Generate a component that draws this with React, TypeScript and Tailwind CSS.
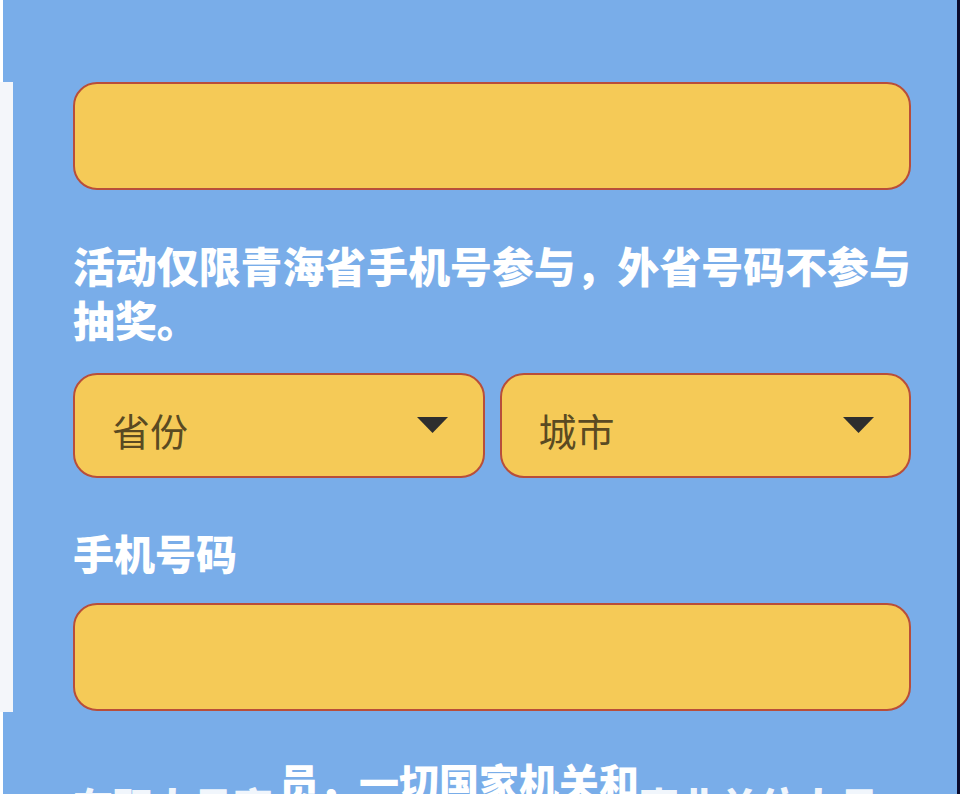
import { useState } from "react";

const cjk = "font-['Noto_Sans_CJK_SC','Noto_Sans',sans-serif]";

function Field({ value, onChange }: { value: string; onChange: (v: string) => void }) {
  return (
    <input
      type="tel"
      value={value}
      onChange={(e) => onChange(e.target.value)}
      className={`block h-[108px] w-full shrink-0 rounded-[24px] border-[2.5px] border-[#b84e3a] bg-[#f5ca57] px-10 text-[38px] text-[#5a4a22] outline-none ${cjk}`}
    />
  );
}

function Select({ label }: { label: string }) {
  return (
    <button
      type="button"
      className={`flex h-[105px] flex-1 items-center justify-between rounded-[24px] border-[2.5px] border-[#b84e3a] bg-[#f5ca57] pl-[37px] pr-[35px] ${cjk}`}
    >
      <span className="mt-[8px] text-[38px] leading-none text-[#5a4a22]">{label}</span>
      <svg width="31" height="16" viewBox="0 0 31 16" className="mt-[-2px]">
        <path d="M0 0 H31 L15.5 16 Z" fill="#2e2e2e" />
      </svg>
    </button>
  );
}

export default function App() {
  const [code, setCode] = useState("");
  const [phone, setPhone] = useState("");

  return (
    <main className={`flex h-[794px] w-[960px] overflow-hidden bg-white ${cjk}`}>
      <div className="flex w-[13px] shrink-0 flex-col">
        <div className="flex h-[82px] shrink-0">
          <div className="w-[3px] bg-white" />
          <div className="flex-1 bg-[#79ade9]" />
        </div>
        <div className="h-[630px] shrink-0 bg-[#f4f6fa]" />
        <div className="flex flex-1">
          <div className="w-[3px] bg-white" />
          <div className="flex-1 bg-[#79ade9]" />
        </div>
      </div>

      <section className="flex flex-1 flex-col bg-[#79ade9] pl-[60px] pr-[46px] pt-[82px]">
        <Field value={code} onChange={setCode} />

        <p className="-mr-[8px] mt-[48px] shrink-0 text-[41.9px] font-black leading-[54px] text-white">
          活动仅限青海省手机号参与，外省号码不参与抽奖。
        </p>

        <div className="mt-[27px] flex shrink-0 gap-[15px]">
          <Select label="省份" />
          <Select label="城市" />
        </div>

        <h2 className="mt-[48px] shrink-0 text-[41px] font-black leading-[52px] text-white">手机号码</h2>

        <div className="mt-[25px] shrink-0">
          <Field value={phone} onChange={setPhone} />
        </div>

        <div className="mt-[46px] flex shrink-0 items-start whitespace-nowrap font-black text-white">
          <span className="mt-[24px] text-[40px] leading-[48px] opacity-90">在职人员家</span>
          <span className="ml-[6px] text-[40px] leading-[48px]">员，一切国家机关和</span>
          <span className="mt-[24px] text-[40px] leading-[48px] opacity-90">事业单位人员</span>
        </div>
      </section>

      <div className="w-[3px] shrink-0 bg-[#0b0b2c]" />
    </main>
  );
}
